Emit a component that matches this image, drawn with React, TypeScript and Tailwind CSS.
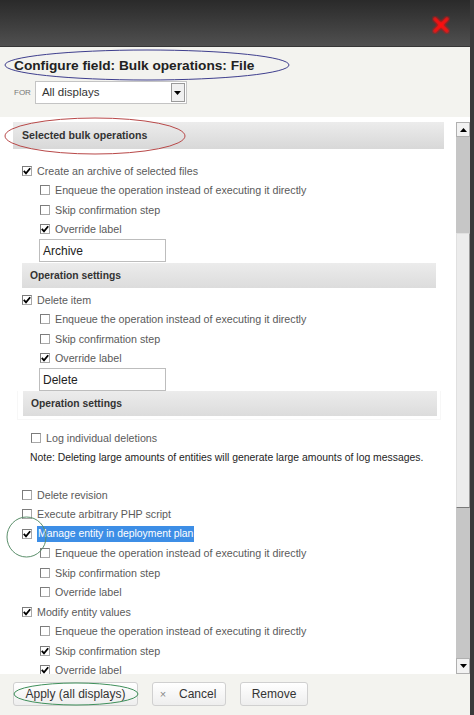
import React from "react";

function Box({ checked }: { checked?: boolean }) {
  return (
    <span className="w-[10px] h-[10px] border border-[#a8a8a8] border-t-[#7c7c7c] border-l-[#7c7c7c] bg-white flex items-center justify-center shrink-0">
      {checked && (
        <svg width="8" height="8" viewBox="0 0 8 8">
          <path d="M0.8 3.8 L3 6.4 L7.2 1.2" stroke="#000" strokeWidth="1.8" fill="none" />
        </svg>
      )}
    </span>
  );
}

function Row({
  checked,
  label,
  sub,
  highlight,
}: {
  checked?: boolean;
  label: string;
  sub?: boolean;
  highlight?: boolean;
}) {
  return (
    <div className={sub ? "h-[19.5px] flex items-center gap-[5px] pl-[40px]" : "h-[19.5px] flex items-center gap-[5px] pl-[22px]"}>
      <Box checked={checked} />
      {highlight ? (
        <span className="bg-[#3d8ee6] text-white px-[1px] leading-[16px] h-[16px] text-[10.4px]">{label}</span>
      ) : (
        <span className="text-[#5a5a5a]">{label}</span>
      )}
    </div>
  );
}

function SubOptions({ enq, skip, over }: { enq?: boolean; skip?: boolean; over?: boolean }) {
  return (
    <>
      <Row sub checked={enq} label="Enqueue the operation instead of executing it directly" />
      <Row sub checked={skip} label="Skip confirmation step" />
      <Row sub checked={over} label="Override label" />
    </>
  );
}

function TextInput({ value }: { value: string }) {
  return (
    <div className="ml-[39px] w-[127px] h-[23px] border border-[#bdbdbd] bg-white flex items-center pl-[3px] text-[12px] text-[#222]">
      {value}
    </div>
  );
}

function OpBar() {
  return (
    <div className="w-[414px] h-[25px] bg-gradient-to-b from-[#ececec] to-[#dcdcdc] flex items-center pl-[8px] font-bold text-[10.3px] text-[#333]">
      Operation settings
    </div>
  );
}

export default function App() {
  return (
    <div className="w-[474px] h-[715px] relative overflow-hidden bg-[#f3f3ef] flex flex-col border-r-[4px] border-[#3a3a3a] font-['Liberation_Sans',Arial,sans-serif] text-[10.7px]">
      {/* Title bar */}
      <div className="h-[47px] shrink-0 bg-gradient-to-b from-[#2a2a2a] to-[#505050] border-b border-[#363636] flex items-center justify-end pr-[20px]">
        <svg width="18" height="18" viewBox="0 0 18 18" className="mt-[4px]">
          <defs>
            <filter id="glow" x="-50%" y="-50%" width="200%" height="200%">
              <feGaussianBlur stdDeviation="0.8" />
            </filter>
          </defs>
          <g filter="url(#glow)">
            <path d="M3 3 L15 15 M15 3 L3 15" stroke="#ff0a0a" strokeWidth="4.2" strokeLinecap="round" />
          </g>
        </svg>
      </div>

      {/* Header */}
      <div className="shrink-0 pl-[14px] pt-[10px]">
        <div className="h-[18px] flex items-center font-bold text-[13.7px] text-[#222]">
          Configure field: Bulk operations: File
        </div>
        <div className="mt-[6px] flex items-center gap-[4px]">
          <span className="text-[8px] text-[#777]">FOR</span>
          <div className="w-[152px] h-[23px] border border-[#c4c4c4] bg-white flex items-center justify-between">
            <span className="pl-[6px] text-[11.5px] text-[#333]">All displays</span>
            <span className="w-[14px] h-[19px] mr-[1px] bg-[#f0f0f0] border border-[#9a9a9a] flex items-center justify-center">
              <svg width="7" height="4" viewBox="0 0 7 4">
                <path d="M0 0 L7 0 L3.5 4 Z" fill="#000" />
              </svg>
            </span>
          </div>
        </div>
      </div>

      {/* Scroll pane */}
      <div className="mt-[13px] h-[557px] shrink-0 bg-white flex">
        <div className="flex-1 overflow-hidden pt-[5px]">
          <div className="ml-[13px] w-[431px] h-[27px] bg-gradient-to-b from-[#ececec] to-[#d8d8d8] flex items-center pl-[9px] font-bold text-[10.6px] text-[#333]">
            Selected bulk operations
          </div>
          <div className="mt-[12px]">
            <Row checked label="Create an archive of selected files" />
            <SubOptions over />
            <TextInput value="Archive" />
            <div className="mt-[1px] mb-[2px] ml-[22px]">
              <OpBar />
            </div>
            <Row checked label="Delete item" />
            <SubOptions over />
            <TextInput value="Delete" />
            <div className="ml-[17px] w-[424px] pb-[3px] border-b border-x border-[#f7f7f7]">
              <div className="ml-[5px]">
                <OpBar />
              </div>
            </div>
            <div className="mt-[8px] h-[20px] flex items-center gap-[5px] pl-[31px]">
              <Box />
              <span className="text-[#5a5a5a]">Log individual deletions</span>
            </div>
            <div className="h-[19px] flex items-center pl-[30px] text-[#1e1e1e] text-[10.4px]">
              Note: Deleting large amounts of entities will generate large amounts of log messages.
            </div>
            <div className="mt-[18px]">
              <Row label="Delete revision" />
              <Row label="Execute arbitrary PHP script" />
              <Row checked highlight label="Manage entity in deployment plan" />
              <SubOptions />
              <Row checked label="Modify entity values" />
              <SubOptions skip over />
            </div>
          </div>
        </div>
        {/* Scrollbar */}
        <div className="w-[14px] pt-[5px] flex flex-col shrink-0">
          <div className="h-[15px] bg-[#f2f2f2] border border-[#b0b0b0] flex items-center justify-center">
            <svg width="7" height="4" viewBox="0 0 7 4">
              <path d="M0 4 L7 4 L3.5 0 Z" fill="#000" />
            </svg>
          </div>
          <div className="flex-1 bg-[#c6c6c6] flex flex-col">
            <div className="h-[96px]" />
            <div className="h-[275px] bg-[#ececec] border border-[#e0e0e0] border-b-[#7a7a7a] border-r-[#9a9a9a]" />
            <div className="flex-1" />
          </div>
          <div className="h-[16px] bg-[#f2f2f2] border border-[#b0b0b0] flex items-center justify-center">
            <svg width="7" height="4" viewBox="0 0 7 4">
              <path d="M0 0 L7 0 L3.5 4 Z" fill="#000" />
            </svg>
          </div>
        </div>
      </div>

      {/* Footer */}
      <div className="flex-1 pt-[8px] pl-[13px] flex gap-[14px] items-start">
        <button className="h-[24px] w-[125px] rounded-[3px] border border-[#d0d0d0] bg-gradient-to-b from-white to-[#eeeeee] text-[12px] text-[#333] flex items-center justify-center">
          Apply (all displays)
        </button>
        <button className="h-[24px] w-[74px] rounded-[3px] border border-[#d0d0d0] bg-gradient-to-b from-white to-[#eeeeee] text-[12px] text-[#333] flex items-center">
          <span className="w-[20px] text-center text-[#888] text-[11px]">×</span>
          <span className="ml-[6px]">Cancel</span>
        </button>
        <button className="h-[24px] w-[68px] rounded-[3px] border border-[#d0d0d0] bg-gradient-to-b from-white to-[#eeeeee] text-[12px] text-[#333] flex items-center justify-center">
          Remove
        </button>
      </div>

      {/* Annotations */}
      <svg className="absolute left-0 top-0 pointer-events-none" width="474" height="715">
        <ellipse cx="147" cy="65" rx="142" ry="15" fill="none" stroke="#3f3f8e" strokeWidth="1" />
        <ellipse cx="95" cy="136" rx="90" ry="18" fill="none" stroke="#b84848" strokeWidth="1" />
        <ellipse cx="26.5" cy="537" rx="19.5" ry="20" fill="none" stroke="#5b8f6b" strokeWidth="1" />
        <ellipse cx="76" cy="694" rx="62" ry="11" fill="none" stroke="#3f8f5a" strokeWidth="1" />
      </svg>
    </div>
  );
}
